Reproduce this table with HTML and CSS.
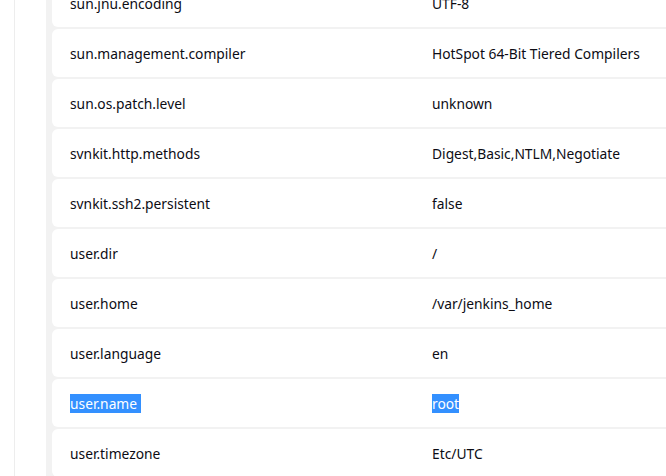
FILE: index.html
```html
<!DOCTYPE html>
<html lang="en">
<head>
<meta charset="utf-8">
<title>System Properties</title>
<link rel="stylesheet" href="styles.css">
</head>
<body>
<div class="page">
  <div class="rail"></div>
  <main class="main">
    <div class="table">
      <div class="row"><div class="key">sun.jnu.encoding</div><div class="val">UTF-8</div></div>
      <div class="row"><div class="key">sun.management.compiler</div><div class="val">HotSpot 64-Bit Tiered Compilers</div></div>
      <div class="row"><div class="key">sun.os.patch.level</div><div class="val">unknown</div></div>
      <div class="row"><div class="key">svnkit.http.methods</div><div class="val">Digest,Basic,NTLM,Negotiate</div></div>
      <div class="row"><div class="key">svnkit.ssh2.persistent</div><div class="val">false</div></div>
      <div class="row"><div class="key">user.dir</div><div class="val">/</div></div>
      <div class="row"><div class="key">user.home</div><div class="val">/var/jenkins_home</div></div>
      <div class="row"><div class="key">user.language</div><div class="val">en</div></div>
      <div class="row"><div class="key"><span class="sel">user.name&nbsp;</span></div><div class="val"><span class="sel">root</span></div></div>
      <div class="row"><div class="key">user.timezone</div><div class="val">Etc/UTC</div></div>
    </div>
  </main>
</div>
</body>
</html>
```
FILE: styles.css
```css
html, body {
  margin: 0;
  padding: 0;
  background: #ffffff;
  overflow: hidden;
}
body {
  font-family: "Noto Sans", "Open Sans", sans-serif;
  font-size: 13.8px;
  color: #0c0c14;
}
.page {
  display: flex;
  height: 476px;
}
.rail {
  width: 14px;
  flex: none;
  border-right: 1px solid #ededed;
}
.main {
  flex: 1;
  padding-left: 31px;
  min-width: 0;
}
.table {
  width: 660px;
  background: #f2f2f2;
  padding-left: 6px;
  margin-top: -21px;
  display: flex;
  flex-direction: column;
  gap: 2px;
  padding-bottom: 20px;
}
.row {
  display: grid;
  grid-template-columns: 362px 1fr;
  align-items: center;
  height: 48px;
  padding-left: 18px;
  background: #ffffff;
  border-radius: 6px;
  line-height: 21px;
}
.sel {
  background: #3390ff;
  color: #ffffff;
}
```
